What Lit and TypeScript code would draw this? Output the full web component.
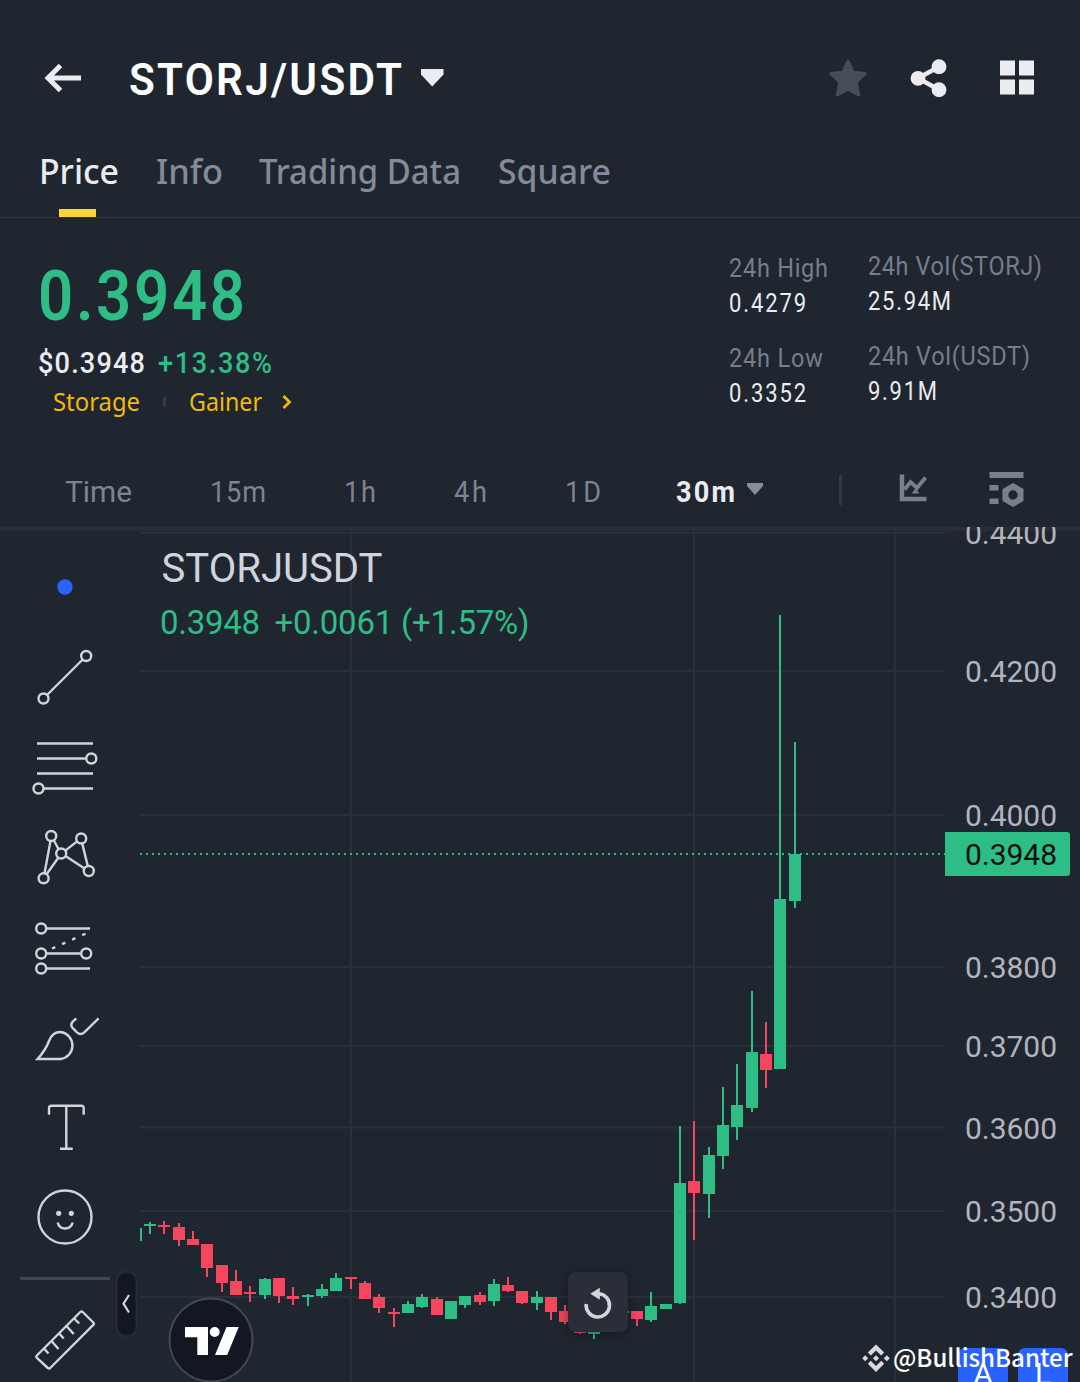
import { LitElement, html, svg, css } from "lit";
import { customElement } from "lit/decorators.js";

type Candle = [x: number, up: 0 | 1, high: number, top: number, bottom: number, low: number];

const CANDLES: Candle[] = [
  [150, 1, 1222, 1224, 1226, 1234],
  [164, 0, 1221, 1225, 1227, 1234],
  [179, 0, 1223, 1227, 1240, 1246],
  [193, 0, 1231, 1239, 1245, 1245],
  [207, 0, 1244, 1244, 1268, 1277],
  [222, 0, 1265, 1265, 1283, 1292],
  [236, 0, 1270, 1281, 1295, 1295],
  [250, 0, 1286, 1292, 1294, 1302],
  [265, 1, 1278, 1279, 1295, 1299],
  [279, 0, 1278, 1278, 1296, 1303],
  [293, 0, 1287, 1296, 1299, 1305],
  [308, 1, 1294, 1295, 1297, 1306],
  [322, 1, 1284, 1289, 1296, 1298],
  [336, 1, 1273, 1278, 1291, 1291],
  [351, 0, 1277, 1277, 1279, 1289],
  [365, 0, 1281, 1283, 1299, 1299],
  [379, 0, 1294, 1297, 1308, 1313],
  [394, 0, 1308, 1312, 1314, 1327],
  [408, 1, 1301, 1304, 1313, 1313],
  [422, 1, 1294, 1297, 1307, 1308],
  [437, 0, 1297, 1299, 1315, 1315],
  [451, 1, 1301, 1301, 1319, 1319],
  [465, 1, 1296, 1296, 1305, 1308],
  [480, 0, 1292, 1295, 1302, 1305],
  [494, 1, 1279, 1284, 1301, 1306],
  [508, 0, 1277, 1285, 1291, 1292],
  [522, 0, 1291, 1291, 1303, 1304],
  [537, 1, 1291, 1297, 1303, 1310],
  [551, 0, 1297, 1297, 1312, 1320],
  [565, 0, 1305, 1311, 1322, 1324],
  [580, 0, 1322, 1322, 1333, 1334],
  [594, 1, 1318, 1320, 1334, 1339],
  [608, 1, 1312, 1314, 1322, 1326],
  [623, 1, 1308, 1311, 1313, 1318],
  [637, 0, 1311, 1311, 1319, 1326],
  [651, 1, 1292, 1306, 1320, 1322],
  [666, 1, 1304, 1304, 1309, 1309],
  [680, 1, 1126, 1183, 1303, 1304],
  [694, 0, 1121, 1181, 1193, 1240],
  [709, 1, 1147, 1155, 1194, 1218],
  [723, 1, 1087, 1125, 1156, 1169],
  [737, 1, 1064, 1105, 1127, 1140],
  [752, 1, 991, 1052, 1108, 1112],
  [766, 0, 1022, 1054, 1070, 1088],
  [780, 1, 615, 899, 1069, 1069],
  [795, 1, 742, 854, 901, 908],
];

const LEVELS: [number, string][] = [
  [533, "0.4400"],
  [671, "0.4200"],
  [815, "0.4000"],
  [967, "0.3800"],
  [1046, "0.3700"],
  [1127.5, "0.3600"],
  [1211, "0.3500"],
  [1297, "0.3400"],
];

const TIME_LINES = [351, 694, 895];

/** One line of text set to an exact width; the box is as tall as the capitals. */
const line = (text: string, width: number, cap: number, cls: string) => html`
  <svg class="line ${cls}" width=${width} height=${cap}>
    <text x="0" y=${cap} textLength=${width} lengthAdjust="spacingAndGlyphs">${text}</text>
  </svg>
`;

/** Like line(), with narrowed glyphs and the remaining width given to letter spacing. */
const narrow = (text: string, width: number, cap: number, cls: string, squeeze = 0.88) => html`
  <svg class="line ${cls}" width=${width} height=${cap}>
    <text transform="translate(0 ${cap}) scale(${squeeze} 1)" textLength=${width / squeeze} lengthAdjust="spacing">${text}</text>
  </svg>
`;

/** Toolbar cell of 140 x 90 whose drawing starts at the given vertical origin. */
const tool = (top: number, drawing: unknown) => html`
  <svg class="tool" width="140" height="90" viewBox="0 ${top} 140 90">${drawing}</svg>
`;

const ring = (x: number, y: number) => svg`<circle cx=${x} cy=${y} r="5" />`;

@customElement("price-chart")
class PriceChart extends LitElement {
  static styles = css`
    :host {
      display: block;
    }
    svg {
      display: block;
      font-family: Roboto, "Liberation Sans", sans-serif;
    }
    .grid {
      stroke: #2a303a;
      stroke-width: 2;
    }
    .up {
      fill: #2ebd85;
    }
    .down {
      fill: #f6465d;
    }
    .axis {
      fill: #b2b5be;
      font-size: 30px;
    }
    .tag {
      fill: #0c0e12;
      font-size: 30px;
    }
    .symbol {
      fill: #d1d4dc;
      font-size: 41px;
    }
    .quote {
      fill: #2ebd85;
      font-size: 33px;
    }
    .last {
      stroke: #2ebd85;
      stroke-width: 2;
      stroke-dasharray: 2 4;
    }
    .scale {
      fill: #2962ff;
    }
    .letter {
      fill: #fff;
      font-size: 30px;
    }
    .crisp {
      shape-rendering: crispEdges;
    }
  `;

  render() {
    return html`
      <svg width="940" height="855" viewBox="140 527 940 855">
        <rect x="140" y="527" width="940" height="4" fill="#272c36" />
        <g class="grid">
          ${LEVELS.map(([y]) => svg`<line x1="140" x2="945" y1=${y} y2=${y} />`)}
          ${TIME_LINES.map((x) => svg`<line x1=${x} x2=${x} y1="527" y2="1382" />`)}
        </g>
        <line class="last" x1="140" x2="945" y1="854" y2="854" />
        <g class="crisp">
          <rect class="up" x="140" y="1228" width="2" height="13" />
          ${CANDLES.map(
            ([x, up, high, top, bottom, low]) => svg`
              <g class=${up ? "up" : "down"}>
                <rect x=${x - 1} y=${high} width="2" height=${low - high} />
                <rect x=${x - 6} y=${top} width="12" height=${bottom - top} />
              </g>`
          )}
        </g>
        <g class="axis">
          ${LEVELS.map(([y, label]) => svg`<text x="965" y=${y + 11} textLength="92">${label}</text>`)}
        </g>
        <path class="up" d="M945 832H1067a3 3 0 0 1 3 3V873a3 3 0 0 1-3 3H945z" />
        <text class="tag" x="965" y="865" textLength="92">0.3948</text>
        <text class="symbol" x="161.5" y="582" textLength="221" lengthAdjust="spacingAndGlyphs">STORJUSDT</text>
        <g class="quote">
          <text x="160" y="634" textLength="100">0.3948</text>
          <text x="274.500" y="634" textLength="255">+0.0061 (+1.57%)</text>
        </g>
        <g class="scale">
          <rect x="958" y="1348" width="50" height="50" rx="7" />
          <rect x="1018" y="1348" width="50" height="50" rx="7" />
        </g>
        <g class="letter">
          <text x="973.2" y="1383.500">A</text>
          <text x="1035" y="1383.500">L</text>
        </g>
      </svg>
    `;
  }
}

@customElement("drawing-tools")
class DrawingTools extends LitElement {
  static styles = css`
    :host {
      display: flex;
      flex-direction: column;
      width: 140px;
      padding-top: 11px;
      border-top: 4px solid #272c36;
      box-sizing: border-box;
    }
    .tool {
      display: block;
      flex: none;
      fill: none;
      stroke: #d1d4dc;
      stroke-width: 2.4;
    }
    .dot {
      fill: #2962ff;
      stroke: none;
    }
    .solid {
      fill: #d1d4dc;
      stroke: none;
    }
    .divider {
      flex: none;
      width: 90px;
      height: 3px;
      margin: 15px 20px;
      background: #434751;
    }
  `;

  render() {
    return html`
      ${tool(542, svg`<circle class="dot" cx="65" cy="587" r="7.7" />`)}
      ${tool(632, svg`${ring(43.5, 698.5)}${ring(86.2, 656)}<path d="M47 695L82.700 659.500" />`)}
      ${tool(
        722,
        svg`${ring(91.3, 758.5)}${ring(38.5, 788.5)}
          <path d="M37 743.500H93M37 758.500H86.300M37 773.500H93M43.500 788.500H93" />`
      )}
      ${tool(
        812,
        svg`${ring(51.2, 836)}${ring(81.2, 838.5)}${ring(61.2, 853.5)}${ring(43.6, 878.3)}${ring(88.8, 871)}
          <path d="M50.500 841L44.500 873.300M53.800 840.300L58.600 849.200M58.300 857.700L46.600 874.200M65.300 850.600L77.100 841.400M65.500 856.100L84.500 868.400M82.200 843.400L87.800 866.100" />`
      )}
      ${tool(
        902,
        svg`${ring(41.2, 928.5)}${ring(41.2, 953.5)}${ring(86.2, 953.5)}${ring(41.2, 968.5)}
          <path d="M46.200 928.500H90M46.200 953.500H81.200M46.200 968.500H90" />
          <path d="M52 948.500L86 933.500" stroke-dasharray="3.600 7.400" />`
      )}
      ${tool(
        992,
        svg`<path d="M37.500 1059H60.500A13.600 13.600 0 0 0 60.500 1032C54.500 1032 50.800 1036 49 1041C46.500 1048 42.500 1053.500 37.500 1059z" />
          <path d="M76.300 1018.300L72.800 1021.600Q69.800 1025 72.800 1028.200L77 1032.300Q80.700 1035.600 84.300 1032.300L98.600 1018.300" />`
      )}
      ${tool(
        1082,
        svg`<path d="M49 1114.700V1108.200Q49 1105.800 51.400 1105.800H81.300Q83.700 1105.800 83.700 1108.200V1114.700M66.300 1106V1148.500M60 1148.700H72.700" />`
      )}
      ${tool(
        1172,
        svg`<circle cx="65" cy="1217" r="26.500" />
          <g class="solid"><circle cx="58.700" cy="1213.300" r="2.600" /><circle cx="71.300" cy="1213.300" r="2.600" /></g>
          <path d="M57.700 1222.500C59.500 1230.500 70.500 1230.500 72.700 1222.500" />`
      )}
      <div class="divider"></div>
      ${tool(
        1295,
        svg`<path stroke-linejoin="round" d="M80.300 1312Q81.500 1310.800 82.700 1312L93.300 1322.500Q94.500 1323.700 93.300 1324.900L50.200 1368Q49 1369.200 47.800 1368L36.900 1357.900Q35.700 1356.700 36.900 1355.500z" />
          <path d="M44 1348.500L48.500 1353.500M51.500 1341L58.500 1349M59.200 1333.500L63.700 1338.500M66.500 1326L73.700 1334M74.200 1318.500L79.200 1323.500" />`
      )}
    `;
  }
}

@customElement("app-root")
class AppRoot extends LitElement {
  static styles = css`
    :host {
      display: block;
    }
    .screen {
      position: relative;
      display: flex;
      flex-direction: column;
      width: 1080px;
      height: 1382px;
      overflow: hidden;
      background: #202630;
      font-family: "Noto Sans", "Open Sans", sans-serif;
    }
    svg {
      display: block;
      flex: none;
    }
    .line {
      overflow: visible;
    }
    .top {
      display: flex;
      align-items: center;
      height: 155px;
      padding: 0 46px 0 44px;
      box-sizing: border-box;
    }
    .pair {
      display: flex;
      align-items: center;
      gap: 18px;
      margin-left: 47px;
    }
    .actions {
      display: flex;
      align-items: center;
      margin-left: auto;
    }
    .share {
      margin: 0 53.5px 0 43px;
    }
    .title {
      fill: #fff;
      font-family: Roboto, sans-serif;
      font-size: 44px;
      font-weight: 600;
      margin-top: 3px;
    }
    .tabs {
      display: grid;
      grid-template-columns: 117px 103px 239px 115px;
      height: 63px;
      padding: 5px 0 0 38.5px;
      box-sizing: border-box;
      border-bottom: 1px solid #2f3640;
    }
    .active {
      display: flex;
      flex-direction: column;
      justify-content: space-between;
    }
    .mark {
      width: 37px;
      height: 8px;
      margin-left: 20.5px;
      background: #fcd535;
    }
    .tab {
      fill: #848b98;
      font-size: 33.5px;
      font-weight: 500;
    }
    .on {
      fill: #eaecef;
    }
    .summary {
      display: flex;
      height: 232px;
    }
    .quote {
      width: 729px;
      padding: 52px 0 0 38px;
      box-sizing: border-box;
    }
    .price {
      fill: #2ebd85;
      font-family: Roboto, sans-serif;
      font-size: 70px;
      font-weight: 600;
    }
    .change {
      display: flex;
      gap: 13px;
      margin-top: 32px;
    }
    .fiat {
      fill: #eaecef;
      font-family: Roboto, sans-serif;
      font-size: 29.5px;
      font-weight: 500;
    }
    .gain {
      fill: #2ebd85;
    }
    .tags {
      display: flex;
      align-items: center;
      margin: 20px 0 0 14.5px;
    }
    .tagtext {
      fill: #f0b90b;
      font-size: 25px;
    }
    .sep {
      width: 3px;
      height: 10px;
      margin: 0 23px 0 23.5px;
      background: #343b47;
    }
    .chevron {
      margin-left: 20px;
    }
    .stats {
      display: flex;
      flex-direction: column;
      gap: 17px;
      width: 139px;
      padding-top: 40.5px;
    }
    .volume {
      width: auto;
      padding-top: 38.5px;
    }
    .stats .second {
      margin-top: 20px;
    }
    .label {
      fill: #757e8b;
      font-family: Roboto, sans-serif;
      font-size: 25px;
    }
    .value {
      fill: #eaecef;
      font-family: Roboto, sans-serif;
      font-size: 25px;
    }
    .frames {
      display: flex;
      align-items: center;
      height: 77px;
      padding-left: 65px;
      box-sizing: border-box;
    }
    .frame {
      fill: #7d8491;
      font-family: Roboto, sans-serif;
      font-size: 29.5px;
      margin-top: 6px;
    }
    .picked {
      fill: #eaecef;
      font-weight: 700;
    }
    .g1 {
      margin-left: 78px;
    }
    .g2 {
      margin-left: 75px;
    }
    .bar {
      width: 3px;
      height: 30px;
      margin-left: 64px;
      margin-top: 3px;
      background: #333a46;
    }
    .body {
      display: flex;
      flex: 1;
      min-height: 0;
      overflow: hidden;
    }
    .overlay {
      position: absolute;
      left: 0;
      top: 1250px;
    }
    .watermark {
      fill: #fff;
      font-family: "Noto Sans CJK SC", "Noto Sans", sans-serif;
      font-size: 24.5px;
      font-weight: 500;
    }
    .shade {
      filter: drop-shadow(0 2px 6px rgba(0, 0, 0, 0.4));
    }
  `;

  render() {
    return html`
      <div class="screen">
        <header class="top">
          <svg width="38" height="30" viewBox="44 62.500 38 30">
            <path d="M60.500 65L48 77.500L60.500 90M48 77.500H81" fill="none" stroke="#eaecef" stroke-width="5" />
          </svg>
          <div class="pair">
            ${narrow("STORJ/USDT", 273, 31, "title", 0.96)}
            <svg width="24" height="18" viewBox="420 68.500 24 18">
              <path d="M421 68.500H443.500V74L432.200 86L421 74z" fill="#eaecef" />
            </svg>
          </div>
          <div class="actions">
            <svg width="38" height="38" viewBox="828.500 59 38 38">
              <path
                d="M847.500 61L852.700 72.200L864.600 73.600L855.800 82L858.200 95L847.500 89.200L836.800 95L839.200 82L830.400 73.600L842.300 72.200z"
                fill="#474d57"
                stroke="#474d57"
                stroke-width="3"
                stroke-linejoin="round"
              />
            </svg>
            <svg class="share" width="37" height="38" viewBox="909.500 58 37 38">
              <path d="M938.500 65.700L917.500 77.300L938.500 88.700" fill="none" stroke="#eaecef" stroke-width="4.500" />
              <g fill="#eaecef">
                <circle cx="938.500" cy="65.700" r="7.400" />
                <circle cx="917.500" cy="77.300" r="7.400" />
                <circle cx="938.500" cy="88.700" r="7.400" />
              </g>
            </svg>
            <svg width="34" height="35" viewBox="0 0 34 35">
              <path d="M0 0.500H15V15.500H0zM19 0.500H34V15.500H19zM0 19.500H15V34.500H0zM19 19.500H34V34.500H19z" fill="#eaecef" />
            </svg>
          </div>
        </header>

        <nav class="tabs">
          <div class="active">
            ${line("Price", 80, 24, "tab on")}
            <div class="mark"></div>
          </div>
          ${line("Info", 67, 24, "tab")} ${line("Trading Data", 202, 24, "tab")} ${line("Square", 113, 24, "tab")}
        </nav>

        <section class="summary">
          <div class="quote">
            ${narrow("0.3948", 207, 50, "price")}
            <div class="change">${narrow("$0.3948", 107, 21, "fiat", 0.92)} ${narrow("+13.38%", 114, 21, "fiat gain", 0.92)}</div>
            <div class="tags">
              ${line("Storage", 87, 18, "tagtext")}
              <div class="sep"></div>
              ${line("Gainer", 73, 18, "tagtext")}
              <svg class="chevron" width="10" height="14" viewBox="0 0 10 14">
                <path d="M1.500 1L7.500 7L1.500 13" fill="none" stroke="#f0b90b" stroke-width="2.800" />
              </svg>
            </div>
          </div>
          <div class="stats">
            ${narrow("24h High", 99, 18, "label", 0.94)} ${narrow("0.4279", 77, 18, "value")}
            ${narrow("24h Low", 94, 18, "label second", 0.94)} ${narrow("0.3352", 77, 18, "value")}
          </div>
          <div class="stats volume">
            ${narrow("24h Vol(STORJ)", 174, 18, "label", 0.94)} ${narrow("25.94M", 83, 18, "value")}
            ${narrow("24h Vol(USDT)", 162, 18, "label second", 0.94)} ${narrow("9.91M", 69, 18, "value")}
          </div>
        </section>

        <section class="frames">
          ${line("Time", 67, 21, "frame")} ${narrow("15m", 56, 21, "frame g1", 0.92)}
          ${narrow("1h", 32, 21, "frame g1", 0.92)} ${narrow("4h", 33, 21, "frame g1", 0.92)}
          ${narrow("1D", 36, 21, "frame g1", 0.92)} ${narrow("30m", 59, 21, "frame picked g2", 0.92)}
          <svg width="40" height="12" viewBox="735 483 40 12">
            <path d="M747 483H763V486L755 495L747 486z" fill="#848e9c" />
          </svg>
          <div class="bar"></div>
          <svg width="187" height="40" viewBox="842 470.500 187 40">
            <g fill="none" stroke="#76808f" stroke-width="4.500">
              <path d="M902 476V500.500H926.500" />
              <path d="M904.500 491L910.500 483.500L917 489.500L925.500 479" stroke-width="3.800" />
            </g>
            <path d="M911.500 495L915.500 490L919.500 495z" fill="#76808f" />
            <g fill="#76808f">
              <path d="M989.500 473.500H1023.500V479.500H989.500zM989.500 486.500H998.500V492H989.500zM989.500 500H998.500V505.500H989.500z" />
              <path
                fill-rule="evenodd"
                d="M1013 484.500L1023.500 490.500V502.500L1013 508.500L1002.500 502.500V490.500zM1013 491.800A4.700 4.700 0 1 0 1013 501.200A4.700 4.700 0 1 0 1013 491.800z"
              />
            </g>
          </svg>
        </section>

        <section class="body">
          <drawing-tools></drawing-tools>
          <price-chart></price-chart>
        </section>

        <svg class="overlay" width="1080" height="132" viewBox="0 1250 1080 132">
          <rect x="116.500" y="1271.500" width="20" height="65" rx="10" fill="#131722" stroke="#272c37" stroke-width="2" />
          <path d="M129 1295L123.500 1303.700L129 1312.500" fill="none" stroke="#d1d4dc" stroke-width="2.200" />
          <circle cx="211" cy="1340" r="41.500" fill="#131722" stroke="#434751" stroke-width="2" />
          <path
            d="M185 1327H208V1355H197.300V1337.200H185zM226.500 1327H238.700L227.200 1355H215zM214.700 1327A5 5 0 1 0 214.700 1337A5 5 0 1 0 214.700 1327z"
            fill="#fff"
          />
          <rect class="shade" x="568" y="1272" width="60" height="60" rx="8" fill="#2a2e39" />
          <path d="M586.200 1304A11.700 11.700 0 1 0 599 1293.700" fill="none" stroke="#d1d4dc" stroke-width="3.600" />
          <path d="M590.300 1293.800L599.800 1287.800V1299.800z" fill="#d1d4dc" />
          <g transform="translate(876 1358.200)" fill="#d8dae0">
            <path d="M0-13.800L8.200-5.600L5.200-2.600L0-7.800L-5.200-2.600L-8.200-5.600zM0 13.800L8.200 5.600L5.200 2.600L0 7.800L-5.200 2.600L-8.200 5.600z" />
            <path d="M0-3L3 0L0 3L-3 0zM-10.800-3L-7.800 0L-10.800 3L-13.800 0zM10.800-3L13.800 0L10.800 3L7.800 0z" />
          </g>
          <text class="watermark" x="893" y="1366.700" textLength="179.500" lengthAdjust="spacingAndGlyphs">@BullishBanter</text>
        </svg>
      </div>
    `;
  }
}
